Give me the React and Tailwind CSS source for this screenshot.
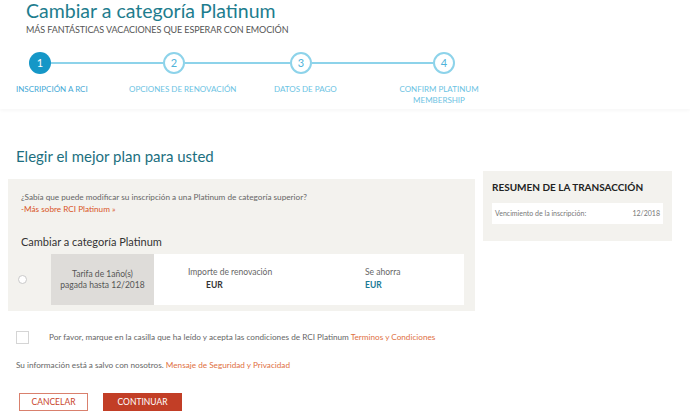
import React from "react";

function Circle({ n, active }) {
  return (
    <div
      className={`flex h-[22px] w-[22px] shrink-0 items-center justify-center rounded-full text-[11px] ${
        active ? "bg-[#1597c7] text-white" : "border-2 border-[#8dd3ea] bg-white text-[#4fb3da]"
      }`}
    >
      {n}
    </div>
  );
}

function Line({ w }) {
  return <div className="h-[2px] bg-[#8dd3ea]" style={{ width: w }} />;
}

export default function App() {
  return (
    <div className="h-[416px] w-[690px] overflow-hidden bg-white font-['Lato','Open_Sans',sans-serif]">
      {/* header */}
      <div className="h-[109px] bg-white shadow-[0_2px_3px_rgba(0,0,0,0.03)]">
        <div className="pl-[26px]">
          <h1 className="text-[19.5px] leading-[22px] text-[#1e7d8e]">Cambiar a categoría Platinum</h1>
          <div className="mt-[2px] text-[9px] uppercase leading-[11px] tracking-[-0.1px] text-[#555]">
            MÁS FANTÁSTICAS VACACIONES QUE ESPERAR CON EMOCIÓN
          </div>
        </div>
        <div className="mt-[17px] flex items-center pl-[29px]">
          <Circle n="1" active />
          <Line w={112} />
          <Circle n="2" />
          <Line w={105} />
          <Circle n="3" />
          <Line w={121} />
          <Circle n="4" />
        </div>
        <div className="mt-[10px] flex text-[8px] uppercase leading-[11px] text-[#6cc3e3]">
          <div className="ml-[16px] w-[80px] text-[#45a9d6]">INSCRIPCIÓN A RCI</div>
          <div className="ml-[33px] w-[130px]">OPCIONES DE RENOVACIÓN</div>
          <div className="ml-[15px] w-[90px]">DATOS DE PAGO</div>
          <div className="ml-[32px] w-[86px] text-center">CONFIRM PLATINUM MEMBERSHIP</div>
        </div>
      </div>

      {/* body */}
      <div className="px-[8px]">
        <h2 className="ml-[8px] mt-[38px] text-[15px] leading-[18px] text-[#1c6f80]">Elegir el mejor plan para usted</h2>
        <div className="mt-[14px] flex items-start gap-[8px]">
          <div className="h-[132px] w-[467px] bg-[#f3f2ee] px-[13px] pt-[13px]">
            <div className="text-[8.2px] leading-[11px] text-[#666]">
              ¿Sabía que puede modificar su inscripción a una Platinum de categoría superior?
            </div>
            <div className="text-[8.2px] leading-[12px] text-[#d9541e]">-Más sobre RCI Platinum »</div>
            <div className="mt-[20px] text-[11px] leading-[14px] text-[#333]">Cambiar a categoría Platinum</div>
            <div className="-mx-[13px] mt-[5px] flex h-[51px] pr-[11px]">
              <div className="flex w-[43px] items-center pl-[10px]">
                <div className="h-[9px] w-[9px] rounded-full border border-[#c9c9c9] bg-white" />
              </div>
              <div className="flex w-[103px] flex-col items-center justify-center bg-[#dedcd9] text-[8.5px] leading-[11px] text-[#555]">
                <div>Tarifa de 1año(s)</div>
                <div>pagada hasta 12/2018</div>
              </div>
              <div className="flex flex-1 bg-white pt-[13px] text-[8.5px] leading-[11px]">
                <div className="ml-[34px] w-[177px]">
                  <div className="text-[#666]">Importe de renovación</div>
                  <div className="ml-[18px] mt-[2px] font-bold text-[#333]">EUR</div>
                </div>
                <div>
                  <div className="text-[#666]">Se ahorra</div>
                  <div className="mt-[2px] font-bold text-[#1a7a95]">EUR</div>
                </div>
              </div>
            </div>
          </div>
          <div className="-mt-[8px] h-[70px] w-[189px] bg-[#f3f2ee] px-[9px] pt-[10px]">
            <div className="text-[10px] font-bold leading-[12px] text-[#222]">RESUMEN DE LA TRANSACCIÓN</div>
            <div className="mt-[10px] flex h-[21px] items-center justify-between bg-white px-[3px] text-[7px] text-[#777]">
              <span>Vencimiento de la inscripción:</span>
              <span>12/2018</span>
            </div>
          </div>
        </div>

        <div className="ml-[8px] mt-[20px] flex items-center">
          <div className="h-[13px] w-[13px] border border-[#d5d5d5] bg-white" />
          <div className="ml-[20px] text-[8.2px] text-[#666]">
            Por favor, marque en la casilla que ha leído y acepta las condiciones de RCI Platinum{" "}
            <span className="text-[#e0703f]">Terminos y Condiciones</span>
          </div>
        </div>
        <div className="ml-[8px] mt-[15px] text-[8.2px] text-[#666]">
          Su información está a salvo con nosotros. <span className="text-[#e0703f]">Mensaje de Seguridad y Privacidad</span>
        </div>
        <div className="ml-[11px] mt-[22px] flex gap-[15px] text-[8.5px]">
          <button className="h-[18px] w-[69px] border border-[#d9806d] bg-white text-[#c8452b]">CANCELAR</button>
          <button className="h-[18px] w-[79px] bg-[#c23e26] text-white">CONTINUAR</button>
        </div>
      </div>
    </div>
  );
}
